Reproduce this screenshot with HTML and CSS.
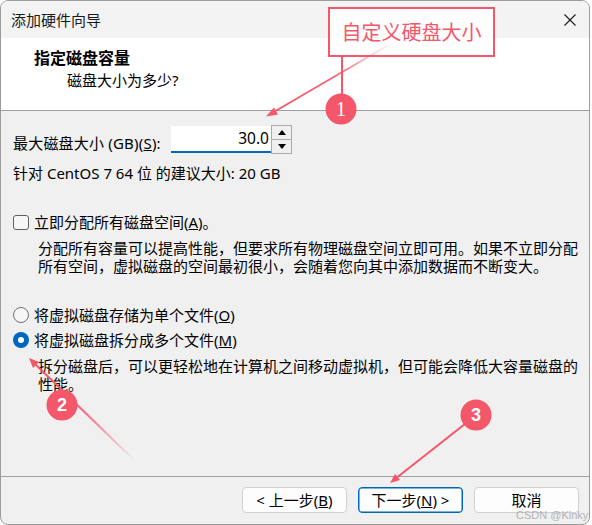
FILE: index.html
```html
<!DOCTYPE html>
<html lang="zh-CN">
<head>
<meta charset="utf-8">
<title>添加硬件向导</title>
<link rel="stylesheet" href="styles.css">
</head>
<body>
<div class="window">
  <div class="titlebar">
    <span class="title">添加硬件向导</span>
    <span class="close">
      <svg width="12" height="12" viewBox="0 0 12 12"><path d="M0.5 0.5 L11.5 11.5 M11.5 0.5 L0.5 11.5" stroke="#1a1a1a" stroke-width="1.1" fill="none"/></svg>
    </span>
  </div>
  <div class="header">
    <div class="h-title">指定磁盘容量</div>
    <div class="h-sub">磁盘大小为多少?</div>
  </div>
  <div class="content">
    <div class="size-row">
      <label class="size-label">最大磁盘大小 (GB)(<u>S</u>):</label>
      <div class="num-input">30.0</div>
      <div class="spinner">
        <div class="spin-btn"><span class="tri-up"></span></div>
        <div class="spin-btn"><span class="tri-down"></span></div>
      </div>
    </div>
    <div class="hint">针对 CentOS 7 64 位 的建议大小: 20 GB</div>

    <div class="opt-row check-row">
      <span class="checkbox"></span>
      <span class="opt-label">立即分配所有磁盘空间(<u>A</u>)。</span>
    </div>
    <p class="desc desc1">分配所有容量可以提高性能，但要求所有物理磁盘空间立即可用。如果不立即分配所有空间，虚拟磁盘的空间最初很小，会随着您向其中添加数据而不断变大。</p>

    <div class="opt-row radio-row1">
      <span class="radio"></span>
      <span class="opt-label">将虚拟磁盘存储为单个文件(<u>O</u>)</span>
    </div>
    <div class="opt-row radio-row2">
      <span class="radio checked"></span>
      <span class="opt-label">将虚拟磁盘拆分成多个文件(<u>M</u>)</span>
    </div>
    <p class="desc desc2">拆分磁盘后，可以更轻松地在计算机之间移动虚拟机，但可能会降低大容量磁盘的性能。</p>
  </div>
  <div class="footer">
    <button class="btn">&lt; 上一步(<u>B</u>)</button>
    <button class="btn primary">下一步(<u>N</u>) &gt;</button>
    <button class="btn">取消</button>
  </div>

  <div class="callout">自定义硬盘大小</div>
  <svg class="annot" width="590" height="525" viewBox="0 0 590 525">
    <defs>
      <linearGradient id="g1" gradientUnits="userSpaceOnUse" x1="267" y1="116" x2="392" y2="43">
        <stop offset="0" stop-color="#f4566a" stop-opacity="1"/>
        <stop offset="0.55" stop-color="#f4566a" stop-opacity="0.9"/>
        <stop offset="1" stop-color="#f4566a" stop-opacity="0"/>
      </linearGradient>
      <linearGradient id="g2" gradientUnits="userSpaceOnUse" x1="29" y1="358" x2="135" y2="461">
        <stop offset="0" stop-color="#f4566a" stop-opacity="1"/>
        <stop offset="0.5" stop-color="#f4566a" stop-opacity="0.9"/>
        <stop offset="1" stop-color="#f4566a" stop-opacity="0"/>
      </linearGradient>
    </defs>
    <line x1="342" y1="56" x2="342" y2="96" stroke="#f4566a" stroke-width="2"/>
    <circle cx="341" cy="109" r="15.5" fill="#f4566a"/>
    <text x="341" y="116" class="num num-serif" text-anchor="middle">1</text>
    <line x1="272" y1="113" x2="392" y2="43" stroke="url(#g1)" stroke-width="2"/>
    <polygon points="266,116.5 274,107.5 278,114.5" fill="#f4566a"/>
    <line x1="33" y1="362" x2="135" y2="461" stroke="url(#g2)" stroke-width="2"/>
    <polygon points="29,358 39,362 33,368" fill="#f4566a"/>
    <circle cx="62" cy="405" r="15.5" fill="#f4566a"/>
    <text x="62" y="411" class="num" text-anchor="middle">2</text>
    <line x1="395" y1="479" x2="470" y2="420" stroke="#f4566a" stroke-width="2"/>
    <polygon points="390,483 395,474 400,480" fill="#f4566a"/>
    <circle cx="476" cy="415" r="15.5" fill="#f4566a"/>
    <text x="476" y="421" class="num" text-anchor="middle">3</text>
  </svg>
  <div class="watermark">CSDN @Kinky</div>
</div>
</body>
</html>
```

FILE: styles.css
```css
html, body {
  margin: 0;
  padding: 0;
  background: #ffffff;
}
body {
  font-family: "Noto Sans", "Noto Sans CJK SC", sans-serif;
  font-size: 15px;
  color: #000;
}
.window {
  position: relative;
  width: 590px;
  height: 525px;
  box-sizing: border-box;
  border: 1px solid #9c9c9c;
  border-radius: 8px;
  overflow: hidden;
  background: #f0f0f0;
  display: flex;
  flex-direction: column;
}
.titlebar {
  height: 37px;
  flex: none;
  background: #f3f3f3;
  display: flex;
  align-items: center;
  justify-content: space-between;
  padding: 0 13px 0 10px;
}
.title {
  font-size: 15px;
  line-height: 20px;
  color: #1a1a1a;
}
.close {
  display: flex;
  width: 12px;
  height: 12px;
}
.header {
  height: 73px;
  flex: none;
  box-sizing: border-box;
  background: #ffffff;
  border-bottom: 1px solid #a0a0a0;
  padding: 8px 0 0 33px;
}
.h-title {
  font-family: "Noto Sans CJK SC", sans-serif;
  font-weight: bold;
  font-size: 16px;
  line-height: 22px;
}
.h-sub {
  margin-top: 2px;
  padding-left: 33px;
  line-height: 20px;
}
.content {
  height: 365px;
  flex: none;
  box-sizing: border-box;
  padding: 14px 0 0 12px;
}
.size-row {
  display: flex;
  align-items: flex-start;
  height: 29px;
}
.size-label {
  width: 158px;
  margin-top: 8px;
  line-height: 20px;
  letter-spacing: 0.2px;
}
.num-input {
  width: 100px;
  height: 27px;
  margin-top: 1px;
  box-sizing: border-box;
  background: #ffffff;
  border-bottom: 2px solid #0067c0;
  text-align: right;
  padding-right: 2px;
  line-height: 24px;
  font-size: 15.5px;
}
.spinner {
  width: 21px;
  height: 29px;
  box-sizing: border-box;
  border: 1px solid #ababab;
  display: flex;
  flex-direction: column;
}
.spin-btn {
  flex: 1;
  display: flex;
  align-items: center;
  justify-content: center;
  background: #f0f0f0;
}
.spin-btn + .spin-btn {
  border-top: 1px solid #ababab;
}
.tri-up, .tri-down {
  width: 0;
  height: 0;
  border-left: 4.5px solid transparent;
  border-right: 4.5px solid transparent;
}
.tri-up { border-bottom: 5px solid #000; }
.tri-down { border-top: 5px solid #000; }
.hint {
  margin-top: 9px;
  line-height: 20px;
}
.opt-row {
  display: flex;
  align-items: center;
  height: 20px;
}
.check-row { margin-top: 29px; }
.radio-row1 { margin-top: 30px; }
.radio-row2 { margin-top: 5px; }
.opt-label {
  margin-left: 5px;
  line-height: 20px;
}
.checkbox {
  width: 16px;
  height: 15px;
  box-sizing: border-box;
  border: 1px solid #606060;
  border-radius: 3px;
  background: #f6f6f6;
}
.radio {
  width: 16px;
  height: 16px;
  box-sizing: border-box;
  border: 1px solid #707070;
  border-radius: 50%;
  background: #f6f6f6;
  display: flex;
  align-items: center;
  justify-content: center;
}
.radio.checked {
  border: none;
  background: #0067c0;
}
.radio.checked::after {
  content: "";
  width: 6px;
  height: 6px;
  border-radius: 50%;
  background: #ffffff;
}
.desc {
  margin: 7px 0 0 25px;
  width: 542px;
  line-height: 18px;
  font-family: "Noto Sans CJK SC", sans-serif;
}
.footer {
  flex: 1;
  border-top: 1px solid #a0a0a0;
  display: flex;
  justify-content: flex-end;
  align-items: flex-start;
  gap: 11px;
  padding: 10px 10px 0 0;
}
.btn {
  width: 105px;
  height: 26px;
  box-sizing: border-box;
  background: #fdfdfd;
  border: 1px solid #d0d0d0;
  border-radius: 4px;
  font-family: "Noto Sans", "Noto Sans CJK SC", sans-serif;
  font-size: 15px;
  line-height: 22px;
  padding: 0;
  color: #000;
}
.btn.primary {
  border: 1px solid #0067c0;
  box-shadow: inset 0 0 0 0.5px #0067c0;
}
.callout {
  position: absolute;
  left: 327px;
  top: 6px;
  width: 167px;
  height: 50px;
  box-sizing: border-box;
  border: 2px solid #f4566a;
  background: rgba(255, 255, 255, 0.8);
  color: #f4566a;
  font-family: "Noto Sans CJK SC", sans-serif;
  font-size: 20px;
  line-height: 46px;
  text-align: center;
  z-index: 2;
}
.annot {
  position: absolute;
  left: -1px;
  top: -1px;
  z-index: 3;
  pointer-events: none;
}
.num {
  font-family: "Liberation Sans", sans-serif;
  font-weight: bold;
  font-size: 18px;
  fill: #ffffff;
}
.num-serif {
  font-family: "Liberation Serif", serif;
  font-weight: normal;
  font-size: 20px;
}
.watermark {
  position: absolute;
  left: 515px;
  top: 507px;
  white-space: nowrap;
  font-family: "Liberation Sans", sans-serif;
  font-size: 11px;
  line-height: 14px;
  color: rgba(165, 165, 165, 0.85);
  z-index: 4;
}
```
